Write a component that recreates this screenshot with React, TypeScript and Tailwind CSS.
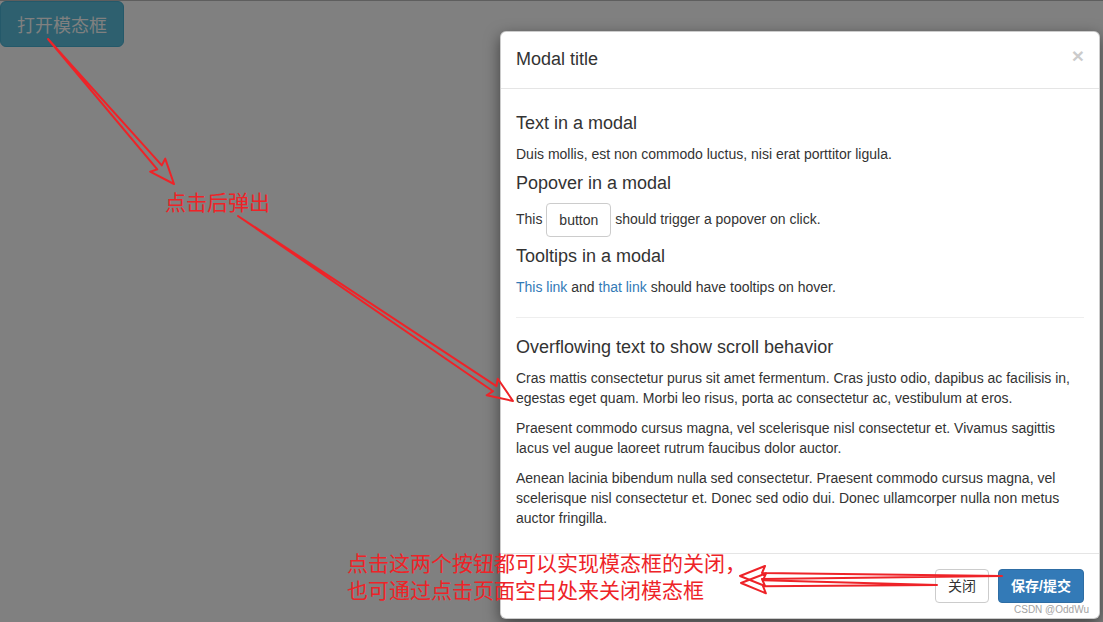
import type { ReactNode } from 'react'

type Pt = [number, number]

// hollow annotation arrow: tail is a point, shaft widens towards an open head
function arrowPoints(tail: Pt, tip: Pt, head = 22, wing = 10, shaft = 3): string {
  const [x1, y1] = tail
  const [x2, y2] = tip
  const len = Math.hypot(x2 - x1, y2 - y1)
  const ux = (x2 - x1) / len
  const uy = (y2 - y1) / len
  const nx = -uy
  const ny = ux
  const bx = x2 - ux * head
  const by = y2 - uy * head
  const pts: Pt[] = [
    [x1, y1],
    [bx + nx * shaft, by + ny * shaft],
    [bx + nx * wing - ux * 3, by + ny * wing - uy * 3],
    [x2, y2],
    [bx - nx * wing - ux * 3, by - ny * wing - uy * 3],
    [bx - nx * shaft, by - ny * shaft],
  ]
  return pts.map((p) => `${p[0].toFixed(1)},${p[1].toFixed(1)}`).join(' ')
}

const arrows: [Pt, Pt][] = [
  [[48, 38], [174, 183]],
  [[238, 215], [513, 400]],
  [[1002, 575], [740, 575]],
  [[937, 584], [741, 582]],
]

function Heading({ children }: { children: ReactNode }) {
  return <h4 className="my-[10px] text-[18px] leading-[1.1] font-medium text-[#333]">{children}</h4>
}

function P({ children }: { children: ReactNode }) {
  return <p className="mb-[10px]">{children}</p>
}

export default function App() {
  return (
    <div
      className="relative w-[1103px] h-[622px] overflow-hidden bg-[#808080] border-t border-[#5e5e5e]"
      style={{ fontFamily: '"Liberation Sans", Arial, "Noto Sans CJK SC", sans-serif' }}
    >
      {/* page behind the backdrop */}
      <button
        type="button"
        className="block h-[46px] px-[16px] rounded-[6px] bg-[#2e606f] border border-[#24596a] text-[18px] leading-[24px] text-[#808080]"
        style={{ fontFamily: '"Noto Sans CJK SC", sans-serif' }}
      >
        打开模态框
      </button>

      {/* modal */}
      <div className="absolute left-[500px] top-[30px] w-[600px] bg-white border border-[rgba(0,0,0,0.2)] rounded-[6px] shadow-[0_5px_15px_rgba(0,0,0,0.5)] text-[14px] leading-[20px] text-[#333]">
        <div className="flex items-start justify-between p-[15px] border-b border-[#e5e5e5]">
          <h4 className="text-[18px] leading-[1.42857] font-normal text-[#333]">Modal title</h4>
          <span
            className="-mt-[2px] text-[21px] leading-none font-bold text-black opacity-20"
            style={{ textShadow: '0 1px 0 #fff' }}
          >
            ×
          </span>
        </div>

        <div className="p-[15px]">
          <Heading>Text in a modal</Heading>
          <P>Duis mollis, est non commodo luctus, nisi erat porttitor ligula.</P>

          <Heading>Popover in a modal</Heading>
          <P>
            This{' '}
            <span className="inline-block align-middle px-[12px] py-[6px] border border-[#ccc] rounded-[4px] bg-white text-[#333]">
              button
            </span>{' '}
            should trigger a popover on click.
          </P>

          <Heading>Tooltips in a modal</Heading>
          <P>
            <span className="text-[#337ab7]">This link</span> and{' '}
            <span className="text-[#337ab7]">that link</span> should have tooltips on hover.
          </P>

          <hr className="my-[20px] border-t border-[#eee]" />

          <Heading>Overflowing text to show scroll behavior</Heading>
          <P>
            Cras mattis consectetur purus sit amet fermentum. Cras justo odio, dapibus ac facilisis in,
            egestas eget quam. Morbi leo risus, porta ac consectetur ac, vestibulum at eros.
          </P>
          <P>
            Praesent commodo cursus magna, vel scelerisque nisl consectetur et. Vivamus sagittis lacus
            vel augue laoreet rutrum faucibus dolor auctor.
          </P>
          <P>
            Aenean lacinia bibendum nulla sed consectetur. Praesent commodo cursus magna, vel
            scelerisque nisl consectetur et. Donec sed odio dui. Donec ullamcorper nulla non metus
            auctor fringilla.
          </P>
        </div>

        <div
          className="flex justify-end gap-[9px] p-[15px] border-t border-[#e5e5e5]"
          style={{ fontFamily: '"Liberation Sans", "Noto Sans CJK SC", sans-serif' }}
        >
          <button
            type="button"
            className="px-[12px] py-[6px] leading-[20px] border border-[#ccc] rounded-[4px] bg-white text-[#333]"
          >
            关闭
          </button>
          <button
            type="button"
            className="px-[12px] py-[6px] leading-[20px] border border-[#2e6da4] rounded-[4px] bg-[#337ab7] text-white font-bold"
          >
            保存/提交
          </button>
        </div>
      </div>

      {/* annotations */}
      <svg className="absolute inset-0 pointer-events-none" width={1103} height={622}>
        {arrows.map(([a, b], i) => (
          <polygon
            key={i}
            points={arrowPoints(a, b)}
            fill="none"
            stroke="#ee2328"
            strokeWidth={2}
            strokeLinejoin="round"
          />
        ))}
      </svg>

      <div
        className="absolute left-[165px] top-[186px] text-[21px] leading-[28px] text-[#ee2328]"
        style={{ fontFamily: '"Noto Sans CJK SC", sans-serif' }}
      >
        点击后弹出
      </div>
      <div
        className="absolute left-[347px] top-[548px] text-[21px] leading-[27px] text-[#ee2328]"
        style={{ fontFamily: '"Noto Sans CJK SC", sans-serif' }}
      >
        <div>点击这两个按钮都可以实现模态框的关闭，</div>
        <div>也可通过点击页面空白处来关闭模态框</div>
      </div>

      <div className="absolute right-[14px] top-[602px] text-[10px] leading-[13px] text-[#a3a3a3]">
        CSDN @OddWu
      </div>
    </div>
  )
}
